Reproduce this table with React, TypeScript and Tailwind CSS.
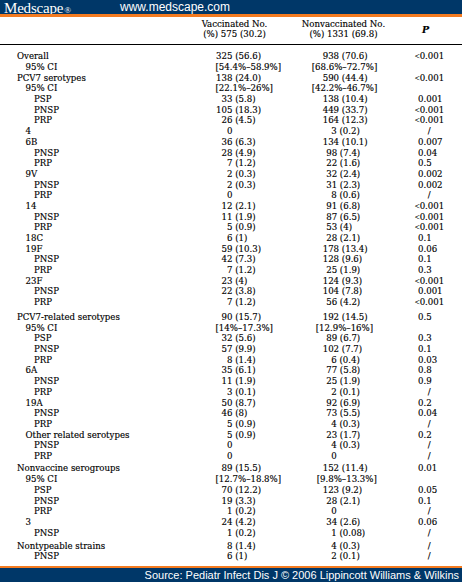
import React from "react";

type Row = {
  label: string;
  lvl: 0 | 1 | 2;
  v: string;
  n: string;
  nCls?: string;
  p: string;
};

const lvlCls: Record<number, string> = {
  0: "pl-[17px]",
  1: "pl-[25.5px]",
  2: "pl-[34px]",
};

const digitPad: Record<number, string> = {
  1: "pl-[8.5px]",
  2: "pl-[3.5px]",
  3: "pl-0",
  4: "pl-0",
};

const blocks: { cls: string; rows: Row[] }[] = [
  {
    cls: "mt-0",
    rows: [
      { label: "Overall", lvl: 0, v: "325 (56.6)", n: "938 (70.6)", p: "<0.001" },
      { label: "95% CI", lvl: 1, v: "[54.4%–58.9%]", n: "[68.6%–72.7%]", nCls: "-ml-[10.5px]", p: "" },
      { label: "PCV7 serotypes", lvl: 0, v: "138 (24.0)", n: "590 (44.4)", p: "<0.001" },
      { label: "95% CI", lvl: 1, v: "[22.1%–26%]", n: "[42.2%–46.7%]", nCls: "-ml-[10.5px]", p: "" },
      { label: "PSP", lvl: 2, v: "33 (5.8)", n: "138 (10.4)", p: "0.001" },
      { label: "PNSP", lvl: 2, v: "105 (18.3)", n: "449 (33.7)", p: "<0.001" },
      { label: "PRP", lvl: 2, v: "26 (4.5)", n: "164 (12.3)", p: "<0.001" },
      { label: "4", lvl: 1, v: "0", n: "3 (0.2)", p: "/" },
      { label: "6B", lvl: 1, v: "36 (6.3)", n: "134 (10.1)", p: "0.007" },
      { label: "PNSP", lvl: 2, v: "28 (4.9)", n: "98 (7.4)", p: "0.04" },
      { label: "PRP", lvl: 2, v: "7 (1.2)", n: "22 (1.6)", p: "0.5" },
      { label: "9V", lvl: 1, v: "2 (0.3)", n: "32 (2.4)", p: "0.002" },
      { label: "PNSP", lvl: 2, v: "2 (0.3)", n: "31 (2.3)", p: "0.002" },
      { label: "PRP", lvl: 2, v: "0", n: "8 (0.6)", p: "/" },
      { label: "14", lvl: 1, v: "12 (2.1)", n: "91 (6.8)", p: "<0.001" },
      { label: "PNSP", lvl: 2, v: "11 (1.9)", n: "87 (6.5)", p: "<0.001" },
      { label: "PRP", lvl: 2, v: "5 (0.9)", n: "53 (4)", p: "<0.001" },
      { label: "18C", lvl: 1, v: "6 (1)", n: "28 (2.1)", p: "0.1" },
      { label: "19F", lvl: 1, v: "59 (10.3)", n: "178 (13.4)", p: "0.06" },
      { label: "PNSP", lvl: 2, v: "42 (7.3)", n: "128 (9.6)", p: "0.1" },
      { label: "PRP", lvl: 2, v: "7 (1.2)", n: "25 (1.9)", p: "0.3" },
      { label: "23F", lvl: 1, v: "23 (4)", n: "124 (9.3)", p: "<0.001" },
      { label: "PNSP", lvl: 2, v: "22 (3.8)", n: "104 (7.8)", p: "0.001" },
      { label: "PRP", lvl: 2, v: "7 (1.2)", n: "56 (4.2)", p: "<0.001" },
    ],
  },
  {
    cls: "mt-[4.2px]",
    rows: [
      { label: "PCV7-related serotypes", lvl: 0, v: "90 (15.7)", n: "192 (14.5)", p: "0.5" },
      { label: "95% CI", lvl: 1, v: "[14%–17.3%]", n: "[12.9%–16%]", nCls: "-ml-[6.5px]", p: "" },
      { label: "PSP", lvl: 2, v: "32 (5.6)", n: "89 (6.7)", p: "0.3" },
      { label: "PNSP", lvl: 2, v: "57 (9.9)", n: "102 (7.7)", p: "0.1" },
      { label: "PRP", lvl: 2, v: "8 (1.4)", n: "6 (0.4)", p: "0.03" },
      { label: "6A", lvl: 1, v: "35 (6.1)", n: "77 (5.8)", p: "0.8" },
      { label: "PNSP", lvl: 2, v: "11 (1.9)", n: "25 (1.9)", p: "0.9" },
      { label: "PRP", lvl: 2, v: "3 (0.1)", n: "2 (0.1)", p: "/" },
      { label: "19A", lvl: 1, v: "50 (8.7)", n: "92 (6.9)", p: "0.2" },
      { label: "PNSP", lvl: 2, v: "46 (8)", n: "73 (5.5)", p: "0.04" },
      { label: "PRP", lvl: 2, v: "5 (0.9)", n: "4 (0.3)", p: "/" },
      { label: "Other related serotypes", lvl: 1, v: "5 (0.9)", n: "23 (1.7)", p: "0.2" },
      { label: "PNSP", lvl: 2, v: "0", n: "4 (0.3)", p: "/" },
      { label: "PRP", lvl: 2, v: "0", n: "0", p: "/" },
    ],
  },
  {
    cls: "mt-[1.8px]",
    rows: [
      { label: "Nonvaccine serogroups", lvl: 0, v: "89 (15.5)", n: "152 (11.4)", p: "0.01" },
      { label: "95% CI", lvl: 1, v: "[12.7%–18.8%]", n: "[9.8%–13.3%]", nCls: "-ml-[5.5px]", p: "" },
      { label: "PSP", lvl: 2, v: "70 (12.2)", n: "123 (9.2)", p: "0.05" },
      { label: "PNSP", lvl: 2, v: "19 (3.3)", n: "28 (2.1)", p: "0.1" },
      { label: "PRP", lvl: 2, v: "1 (0.2)", n: "0", p: "/" },
      { label: "3", lvl: 1, v: "24 (4.2)", n: "34 (2.6)", p: "0.06" },
      { label: "PNSP", lvl: 2, v: "1 (0.2)", n: "1 (0.08)", p: "/" },
    ],
  },
  {
    cls: "mt-[2.5px]",
    rows: [
      { label: "Nontypeable strains", lvl: 0, v: "8 (1.4)", n: "4 (0.3)", p: "/" },
      { label: "PNSP", lvl: 2, v: "6 (1)", n: "2 (0.1)", p: "/" },
    ],
  },
];

function splitNum(s: string): [string, string] {
  const i = s.indexOf(" ");
  if (i < 0) return [s, ""];
  return [s.slice(0, i), s.slice(i)];
}

function VCell({ v }: { v: string }) {
  if (v.startsWith("[")) {
    return (
      <div className="w-[106.7px] shrink-0 whitespace-nowrap -ml-[0.5px]">{v}</div>
    );
  }
  const [num, rest] = splitNum(v);
  return (
    <div className="w-[106.7px] shrink-0 flex whitespace-pre">
      <span className="w-[16.5px] text-right shrink-0">{num}</span>
      <span>{rest}</span>
    </div>
  );
}

function NCell({ n, cls }: { n: string; cls?: string }) {
  if (n.startsWith("[")) {
    return (
      <div className="w-[91.8px] shrink-0 whitespace-nowrap">
        <span className={cls}>{n}</span>
      </div>
    );
  }
  const [num] = splitNum(n);
  return (
    <div className={`w-[91.8px] shrink-0 whitespace-pre ${digitPad[num.length]}`}>{n}</div>
  );
}

function PCell({ p }: { p: string }) {
  if (!p) return <div className="flex-1" />;
  if (p.startsWith("<")) {
    return (
      <div className="flex-1 pl-[3.5px] whitespace-nowrap">
        <span className="-ml-[3.3px] font-['Liberation_Serif',serif] text-[8.8px]">&lt;</span>
        {p.slice(1)}
      </div>
    );
  }
  if (p === "/") {
    return <div className="flex-1 pl-[13.2px]">/</div>;
  }
  return <div className="flex-1 pl-[3.5px]">{p}</div>;
}

export default function App() {
  return (
    <div className="w-[462px] h-[582px] bg-white text-black overflow-hidden flex flex-col">
      {/* top banner */}
      <div className="h-[14px] bg-[#003768] flex items-start text-white shrink-0">
        <div className="w-[120px] pl-[4px] pt-[0.5px] font-['Liberation_Serif',serif] text-[15px] leading-[14px] tracking-[-0.2px] whitespace-nowrap">
          Medscape<span className="text-[9px] leading-[8px] ml-[1px]">®</span>
        </div>
        <div className="font-['Liberation_Sans',sans-serif] text-[12px] leading-[14px] whitespace-nowrap">
          www.medscape.com
        </div>
      </div>
      <div className="h-[3px] bg-[#f47b20] shrink-0" />

      {/* body */}
      <div className="font-['DejaVu_Serif',serif] text-[8.6px] [-webkit-text-stroke:0.15px_black]">
        {/* header */}
        <div className="h-[27px] pt-[3px] flex leading-[9.5px]">
          <div className="w-[200px]" />
          <div className="w-[69px] text-center whitespace-nowrap">
            <div>Vaccinated No.</div>
            <div>(%) 575 (30.2)</div>
          </div>
          <div className="w-[21px]" />
          <div className="w-[107px] text-center whitespace-nowrap">
            <div>Nonvaccinated No.</div>
            <div>(%) 1331 (69.8)</div>
          </div>
          <div className="w-[13px]" />
          <div className="w-[31px] h-[19px] flex items-center justify-center text-[9.5px] font-bold italic">
            P
          </div>
        </div>
        <div className="h-px bg-black" />

        <div className="pt-[6.35px] leading-[10.7px]">
          {blocks.map((b, bi) => (
            <div key={bi} className={b.cls}>
              {b.rows.map((r, ri) => (
                <div key={ri} className="flex h-[10.7px] whitespace-nowrap">
                  <div className={`w-[216px] shrink-0 ${lvlCls[r.lvl]}`}>{r.label}</div>
                  <VCell v={r.v} />
                  <NCell n={r.n} cls={r.nCls} />
                  <PCell p={r.p} />
                </div>
              ))}
            </div>
          ))}
        </div>
      </div>

      {/* footer */}
      <div className="mt-auto shrink-0">
        <div className="h-[2px] bg-[#f47b20]" />
        <div className="h-[14px] bg-[#003768] flex items-center justify-end pr-[3px]">
          <span className="font-['Liberation_Sans',sans-serif] text-[11px] leading-[14px] text-white whitespace-nowrap">
            Source: Pediatr Infect Dis J © 2006 Lippincott Williams &amp; Wilkins
          </span>
        </div>
      </div>
    </div>
  );
}
